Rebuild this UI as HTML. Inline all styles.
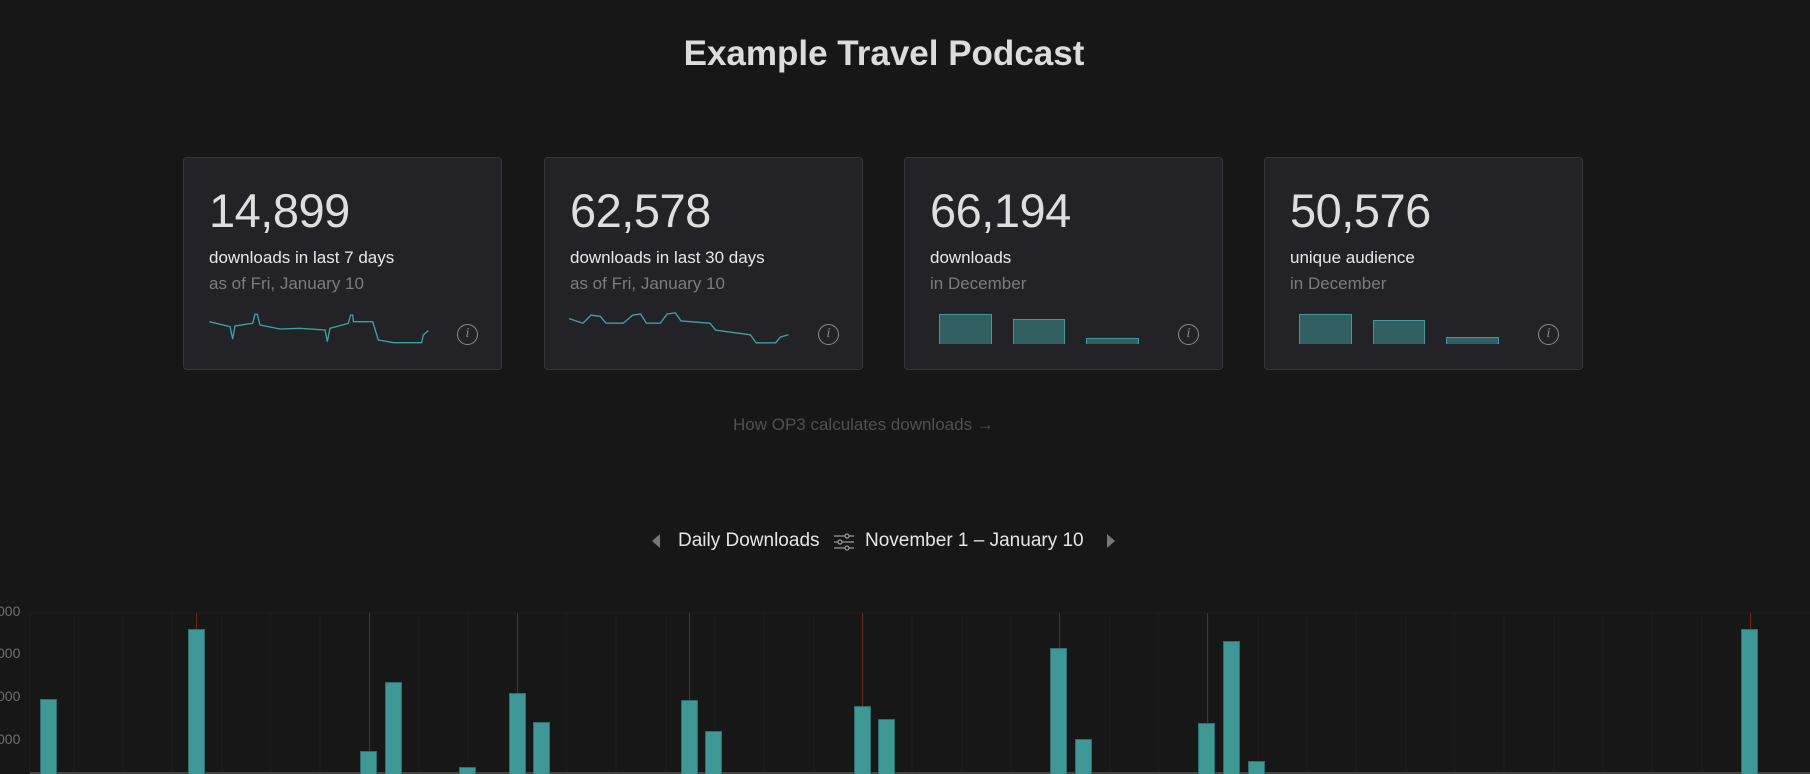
<!DOCTYPE html>
<html><head><meta charset="utf-8"><style>
*{margin:0;padding:0;box-sizing:border-box}
body{width:1810px;height:774px;overflow:hidden;background:#171717;font-family:"Liberation Sans","DejaVu Sans",sans-serif;position:relative;color:#e6e6e6}
.abs{position:absolute}
h1{position:absolute;left:0;width:1768px;text-align:center;top:34px;font-size:35px;font-weight:bold;color:#dcdcdc;letter-spacing:0px}
.card{position:absolute;top:157px;width:319px;height:213px;background:#232327;border:1px solid #36363a;border-radius:4px}
.num{position:absolute;left:25px;top:25px;font-size:47px;color:#dedede;letter-spacing:-0.5px}
.l1{position:absolute;left:25px;top:90px;font-size:17px;color:#e8e8e8}
.l2{position:absolute;left:25px;top:116px;font-size:17px;color:#7c7c7c}
.info{position:absolute;left:273px;top:166px;width:21px;height:21px;border:1.5px solid #8a8a8a;border-radius:50%;color:#8a8a8a;font:italic 14px "Liberation Serif",serif;text-align:center;line-height:18px}
.mb{position:absolute;background:#325f62;border:1.5px solid #3d9b9b;border-bottom:none}
.bar{position:absolute;width:17px;background:#3f9796;border:1px solid #2f6e6e;border-bottom:none}
.red{position:absolute;width:1px;background:#6b2418;top:613px}
.yl{position:absolute;left:-3px;font-size:14px;color:#6f6f6f}
</style></head><body>
<h1>Example Travel Podcast</h1>

<div class="card" style="left:183px"><div class="num">14,899</div><div class="l1">downloads in last 7 days</div><div class="l2">as of Fri, January 10</div><div class="info">i</div></div>
<div class="card" style="left:544px"><div class="num">62,578</div><div class="l1">downloads in last 30 days</div><div class="l2">as of Fri, January 10</div><div class="info">i</div></div>
<div class="card" style="left:904px"><div class="num">66,194</div><div class="l1">downloads</div><div class="l2">in December</div><div class="info">i</div></div>
<div class="card" style="left:1264px"><div class="num">50,576</div><div class="l1">unique audience</div><div class="l2">in December</div><div class="info">i</div></div>

<svg class="abs" style="left:180px;top:150px" width="340" height="230" viewBox="0 0 1020 690"><path d="M88 515 L150 530 L158 567 L165 528 L218 520 L225 493 L232 493 L240 525 L300 537 L360 535 L435 540 L442 575 L450 535 L505 520 L512 495 L518 495 L520 515 L578 515 L595 570 L640 578 L725 578 L730 555 L745 542" fill="none" stroke="#3aa3a0" stroke-width="4"/></svg>
<svg class="abs" style="left:0;top:0" width="1810" height="774" viewBox="0 0 1568 670.5"><path d="M493 276 L505 280 L512 273 L520 274 L525 280 L540 280 L548 273 L555 272 L560 280 L572 280 L578 272 L585 271 L590 278 L615 280 L620 286 L650 290 L655 297 L672 297 L676 292 L683 290" fill="none" stroke="#3aa3a0" stroke-width="1.2"/></svg>

<div class="mb" style="left:939px;top:314px;width:53px;height:30px"></div>
<div class="mb" style="left:1013px;top:319px;width:52px;height:25px"></div>
<div class="mb" style="left:1086px;top:338px;width:53px;height:6px"></div>
<div class="mb" style="left:1299px;top:314px;width:53px;height:30px"></div>
<div class="mb" style="left:1373px;top:320px;width:52px;height:24px"></div>
<div class="mb" style="left:1446px;top:337px;width:53px;height:7px"></div>

<div class="abs" style="left:733px;top:415px;font-size:17px;color:#505050">How OP3 calculates downloads →</div>

<svg class="abs" style="left:650px;top:533px" width="12" height="16"><path d="M10 1 L2 8 L10 15Z" fill="#777"/></svg>
<div class="abs" style="left:678px;top:530px;font-size:19px;color:#e6e6e6">Daily Downloads</div>
<svg class="abs" style="left:833px;top:531px" width="22" height="22" viewBox="0 0 22 22" fill="none" stroke="#999" stroke-width="1.3"><path d="M1 5H12M16 5H21M1 11H5M9 11H21M1 17H12M16 17H21"/><circle cx="14" cy="5" r="2"/><circle cx="7" cy="11" r="2"/><circle cx="14" cy="17" r="2"/></svg>
<div class="abs" style="left:865px;top:530px;font-size:19px;color:#e6e6e6">November 1 – January 10</div>
<svg class="abs" style="left:1105px;top:533px" width="12" height="16"><path d="M2 1 L10 8 L2 15Z" fill="#777"/></svg>

<svg class="abs" style="left:0;top:612px" width="1810" height="162"><g stroke="#1c1c1c" stroke-width="1"><path d="M30 0V162M74 0V162M123 0V162M172 0V162M222 0V162M271 0V162M320 0V162M370 0V162M419 0V162M468 0V162M518 0V162M567 0V162M616 0V162M666 0V162M715 0V162M764 0V162M814 0V162M863 0V162M912 0V162M962 0V162M1011 0V162M1060 0V162M1110 0V162M1159 0V162M1208 0V162M1258 0V162M1307 0V162M1356 0V162M1406 0V162M1455 0V162M1504 0V162M1554 0V162M1603 0V162M1652 0V162M1702 0V162M1751 0V162"/><path d="M30 1H1810" /></g><path d="M30 161H1810" stroke="#444" stroke-width="2"/></svg>
<div class="yl" style="top:603px">000</div>
<div class="yl" style="top:645px">000</div>
<div class="yl" style="top:688px">000</div>
<div class="yl" style="top:731px">000</div>

<div class="red" style="left:196px;height:20px"></div>
<div class="red" style="left:369px;height:140px"></div>
<div class="red" style="left:517px;height:80px"></div>
<div class="red" style="left:689px;height:90px"></div>
<div class="red" style="left:862px;height:95px"></div>
<div class="red" style="left:1059px;height:37px"></div>
<div class="red" style="left:1207px;height:112px"></div>
<div class="red" style="left:1750px;height:18px"></div>

<div class="bar" style="left:40px;top:699px;height:75px"></div>
<div class="bar" style="left:188px;top:629px;height:145px"></div>
<div class="bar" style="left:360px;top:751px;height:23px"></div>
<div class="bar" style="left:385px;top:682px;height:92px"></div>
<div class="bar" style="left:459px;top:767px;height:7px"></div>
<div class="bar" style="left:509px;top:693px;height:81px"></div>
<div class="bar" style="left:533px;top:722px;height:52px"></div>
<div class="bar" style="left:681px;top:700px;height:74px"></div>
<div class="bar" style="left:705px;top:731px;height:43px"></div>
<div class="bar" style="left:854px;top:706px;height:68px"></div>
<div class="bar" style="left:878px;top:719px;height:55px"></div>
<div class="bar" style="left:1050px;top:648px;height:126px"></div>
<div class="bar" style="left:1075px;top:739px;height:35px"></div>
<div class="bar" style="left:1198px;top:723px;height:51px"></div>
<div class="bar" style="left:1223px;top:641px;height:133px"></div>
<div class="bar" style="left:1248px;top:761px;height:13px"></div>
<div class="bar" style="left:1741px;top:629px;height:145px"></div>
</body></html>
